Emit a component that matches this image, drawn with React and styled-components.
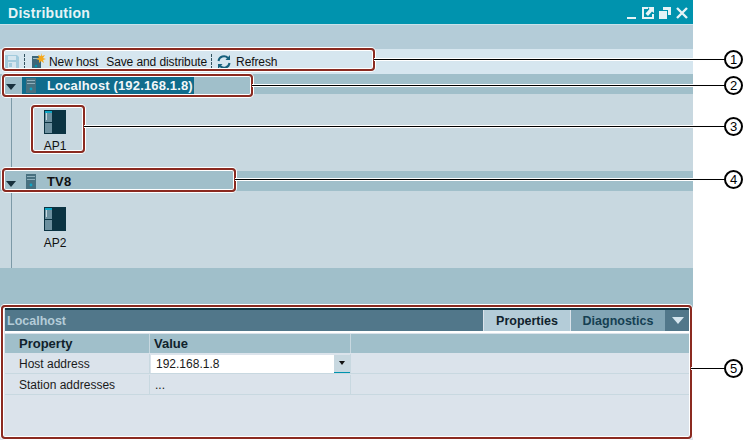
import React from "react"
import styled, { createGlobalStyle } from "styled-components"

const GlobalStyle = createGlobalStyle`
  html, body { margin: 0; padding: 0; background: #fff; }
  body { font-family: "Liberation Sans", sans-serif; font-size: 12px; color: #111; }
`

const Page = styled.div`
  position: relative;
  width: 743px;
  height: 440px;
  overflow: hidden;
`
const Win = styled.div`
  width: 693px;
  height: 440px;
  display: flex;
  flex-direction: column;
  background: #dbe3eb;
`
const TitleBar = styled.div`
  height: 22px;
  flex: none;
  display: flex;
  align-items: center;
  justify-content: space-between;
  padding: 2px 5px 0 8px;
  background: #0093ae;
  border-bottom: 1px solid #c9e2ea;
`
const Title = styled.span`
  font-size: 14px;
  font-weight: 700;
  letter-spacing: 0.3px;
  color: #e6f3f6;
`
const WinButtons = styled.div`
  display: flex;
  gap: 5px;
  align-items: center;
`
const Band = styled.div`
  height: 24px;
  flex: none;
  background: #b4ccd8;
`
const Toolbar = styled.div`
  height: 25px;
  flex: none;
  display: flex;
  align-items: center;
  padding: 0 0 0 5px;
  background: #d6e6ef;
`
const ToolText = styled.span`
  margin-left: ${p => p.$gap || 3}px;
  letter-spacing: -0.1px;
  white-space: nowrap;
`
const ToolSep = styled.span`
  width: 0;
  height: 15px;
  margin: 0 ${p => p.$right}px 0 ${p => p.$left}px;
  border-left: 1px dashed #33525f;
`
const Tree = styled.div`
  flex: none;
  height: 194px;
  background: #c8d8e0;
`
const HostRow = styled.div`
  height: 20px;
  display: flex;
  align-items: flex-end;
  background: #a0bfca;
`
const Arrow = styled.span`
  width: 0;
  height: 0;
  margin: 0 6px 4px 6px;
  border-style: solid;
  border-width: 6px 5.5px 0 5.5px;
  border-color: #17303c transparent transparent transparent;
`
const HostLabel = styled.div`
  height: ${p => (p.$selected ? 17 : 20)}px;
  display: flex;
  align-items: center;
  padding: 0 1px 0 4px;
  background: ${p => (p.$selected ? "#0f6c8c" : "transparent")};
`
const HostName = styled.span`
  margin-left: 11px;
  font-size: 13px;
  font-weight: 700;
  letter-spacing: 0.15px;
  color: ${p => (p.$selected ? "#f2f7f9" : "#111")};
`
const HostBody = styled.div`
  height: 77px;
  margin-left: 11px;
  padding: 16px 0 0 32px;
  border-left: 1px solid #7c99a7;
  box-sizing: border-box;
`
const Station = styled.div`
  width: 22px;
  display: flex;
  flex-direction: column;
  align-items: center;
`
const StationLabel = styled.span`
  margin-top: 5px;
  white-space: nowrap;
`
const Gap = styled.div`
  height: 40px;
  flex: none;
  background: #a0bfca;
`
const Panel = styled.div`
  flex: 1;
  display: flex;
  flex-direction: column;
  padding: 0 3px 0 5px;
  background: #dbe3eb;
`
const PanelHead = styled.div`
  height: 21px;
  flex: none;
  display: flex;
  align-items: flex-end;
  justify-content: space-between;
  background: #51778a;
  border-top: 2px solid #0e3440;
  border-bottom: 2px solid #fff;
`
const PanelTitle = styled.span`
  align-self: center;
  margin-left: 2px;
  font-size: 12.5px;
  font-weight: 700;
  color: #b4ccd8;
`
const Tabs = styled.div`
  display: flex;
  height: 100%;
`
const Tab = styled.div`
  width: ${p => p.$width}px;
  display: flex;
  align-items: center;
  justify-content: center;
  font-size: 12.5px;
  font-weight: 700;
  color: ${p => (p.$active ? "#10222c" : "#153f52")};
  background: ${p => (p.$active ? "#b4ccd8" : "#82a5b5")};
  border-left: 1px solid #dbe3eb;
  box-sizing: border-box;
`
const TabMenu = styled.div`
  width: 25px;
  display: flex;
  align-items: center;
  justify-content: center;
`
const TabArrow = styled.span`
  width: 0;
  height: 0;
  border-style: solid;
  border-width: 7px 6px 0 6px;
  border-color: #d6e6ef transparent transparent transparent;
`
const Row = styled.div`
  display: grid;
  grid-template-columns: 145px 201px 1fr;
  height: ${p => (p.$head ? 19 : 21)}px;
  flex: none;
  padding-top: ${p => (p.$head ? 0 : 1)}px;
  font-size: ${p => (p.$head ? 13 : 12)}px;
  font-weight: ${p => (p.$head ? 700 : 400)};
  background: ${p => (p.$head ? "#a0bfca" : "transparent")};
  border-bottom: ${p => (p.$head ? "0" : "1px solid #c8d8e0")};
  margin-top: ${p => (p.$head ? 1 : 0)}px;
  box-sizing: border-box;
`
const Cell = styled.div`
  display: flex;
  align-items: center;
  padding-left: ${p => p.$pad}px;
  border-right: 1px solid #c8d8e0;
  color: ${p => (p.$head ? "#10222c" : "#1a1a1a")};
`
const Combo = styled.div`
  flex: 1;
  height: 18px;
  margin-left: 1px;
  display: flex;
  align-items: center;
  justify-content: space-between;
  padding-left: 5px;
  background: #fff;
`
const ComboButton = styled.div`
  width: 16px;
  height: 18px;
  display: flex;
  align-items: center;
  justify-content: center;
  background: #c8d8e0;
  border-bottom: 1px solid #0093ae;
  box-sizing: border-box;
`
const ComboArrow = styled.span`
  width: 0;
  height: 0;
  border-style: solid;
  border-width: 4px 3.5px 0 3.5px;
  border-color: #111 transparent transparent transparent;
`
const Marker = styled.div`
  position: absolute;
  left: ${p => p.$x}px;
  top: ${p => p.$y}px;
  width: ${p => p.$w}px;
  height: ${p => p.$h}px;
  box-sizing: border-box;
  border: 2px solid #8b2a20;
  border-radius: 4px;
  box-shadow: 0 0 0 1px #fff, inset 0 0 0 1px #fff;
`
const Leader = styled.div`
  position: absolute;
  left: ${p => p.$x}px;
  top: ${p => p.$y}px;
  width: ${p => 725 - p.$x}px;
  height: 1px;
  background: #000;
  box-shadow: 0 1px 0 #fff, 0 -1px 0 #fff;
`
const Bubble = styled.div`
  position: absolute;
  left: 724px;
  top: ${p => p.$y - 9}px;
  width: 19px;
  height: 19px;
  box-sizing: border-box;
  display: flex;
  align-items: center;
  justify-content: center;
  border: 2px solid #000;
  border-radius: 50%;
  background: #fff;
  font-size: 13px;
  color: #000;
`

const Minimize = () => (
  <svg width="10" height="12" viewBox="0 0 10 12"><rect x="0" y="10" width="9" height="2" fill="#e6f3f6" /></svg>
)
const Detach = () => (
  <svg width="12" height="12" viewBox="0 0 12 12">
    <path d="M6 1H1v10h10V7" fill="none" stroke="#e6f3f6" strokeWidth="2" />
    <path d="M6 0h6v6L10 4.500 6 9 3.500 6.500 7.500 2z" fill="#e6f3f6" />
  </svg>
)
const Restore = () => (
  <svg width="12" height="12" viewBox="0 0 12 12" fill="#e6f3f6">
    <path d="M4 0h8v8H9V3H4z" />
    <rect x="0" y="4" width="8" height="8" />
  </svg>
)
const CloseX = () => (
  <svg width="12" height="12" viewBox="0 0 12 12" stroke="#e6f3f6" strokeWidth="2.400">
    <path d="M1 1l10 10M11 1L1 11" />
  </svg>
)
const SaveIcon = () => (
  <svg width="14" height="13" viewBox="0 0 14 13">
    <path d="M0 0h12l2 2v11H0z" fill="#a3cbdd" />
    <rect x="3" y="1" width="8" height="4" fill="#d6e6ef" />
    <rect x="3" y="7" width="8" height="6" fill="#d6e6ef" />
    <rect x="4" y="8" width="3" height="4" fill="#a3cbdd" />
  </svg>
)
const NewHostIcon = () => (
  <svg width="14" height="17" viewBox="0 0 14 17">
    <rect x="0" y="3" width="9" height="14" fill="#3d6678" />
    <rect x="1" y="5" width="7" height="1" fill="#a0bfca" />
    <circle cx="4" cy="13" r="1.300" fill="#0093ae" />
    <path d="M9 0l1 3 3-1-2 3 3 1-3 1 1 3-3-2-2 2 0-3-3-1 3-1-1-3 3 1z" fill="#f5a81c" />
  </svg>
)
const RefreshIcon = () => (
  <svg width="14" height="14" viewBox="0 0 14 14" fill="none" stroke="#17607c" strokeWidth="2">
    <path d="M1.500 6a5.500 5.500 0 0 1 9.500-3" />
    <path d="M12.500 8a5.500 5.500 0 0 1-9.500 3" />
    <path d="M13 0v5H8.500z" fill="#17607c" stroke="none" />
    <path d="M1 14V9h4.500z" fill="#17607c" stroke="none" />
  </svg>
)
const ServerIcon = () => (
  <svg width="10" height="15" viewBox="0 0 10 15">
    <rect width="10" height="15" fill="#47707f" />
    <rect x="1" y="2" width="8" height="1" fill="#8fb0bd" />
    <rect x="1" y="5" width="8" height="1" fill="#8fb0bd" />
    <circle cx="5" cy="11" r="1.400" fill="#0ea5c4" />
  </svg>
)
const StationIcon = () => (
  <svg width="22" height="24" viewBox="0 0 22 24">
    <rect width="22" height="24" fill="#0b3342" />
    <rect x="1" y="1" width="7" height="11" fill="#6d909f" />
    <rect x="1" y="1" width="7" height="2" fill="#0ea5c4" />
    <rect x="2" y="3" width="1" height="7" fill="#c8d8e0" />
    <rect x="1" y="13" width="7" height="10" fill="#6d909f" />
  </svg>
)

const Host = ({ name, selected, station }) => (
  <>
    <HostRow>
      <Arrow />
      <HostLabel $selected={selected}>
        <ServerIcon />
        <HostName $selected={selected}>{name}</HostName>
      </HostLabel>
    </HostRow>
    <HostBody>
      <Station>
        <StationIcon />
        <StationLabel>{station}</StationLabel>
      </Station>
    </HostBody>
  </>
)

const callouts = [
  { n: 1, x: 374, y: 59 },
  { n: 2, x: 252, y: 85 },
  { n: 3, x: 84, y: 126 },
  { n: 4, x: 235, y: 179 },
  { n: 5, x: 691, y: 368 },
]

const markers = [
  { x: 2, y: 48, w: 373, h: 23 },
  { x: 2, y: 74, w: 251, h: 23 },
  { x: 31, y: 105, w: 54, h: 48 },
  { x: 2, y: 168, w: 234, h: 24 },
  { x: 1, y: 305, w: 691, h: 134 },
]

const App = () => (
  <Page>
    <GlobalStyle />
    <Win>
      <TitleBar>
        <Title>Distribution</Title>
        <WinButtons>
          <Minimize />
          <Detach />
          <Restore />
          <CloseX />
        </WinButtons>
      </TitleBar>
      <Band />
      <Toolbar>
        <SaveIcon />
        <ToolSep $left={5} $right={7} />
        <NewHostIcon />
        <ToolText>New host</ToolText>
        <ToolText $gap={8}>Save and distribute</ToolText>
        <ToolSep $left={4} $right={5} />
        <RefreshIcon />
        <ToolText $gap={5}>Refresh</ToolText>
      </Toolbar>
      <Tree>
        <Host name="Localhost (192.168.1.8)" selected station="AP1" />
        <Host name="TV8" station="AP2" />
      </Tree>
      <Gap />
      <Panel>
        <PanelHead>
          <PanelTitle>Localhost</PanelTitle>
          <Tabs>
            <Tab $active $width={87}>Properties</Tab>
            <Tab $width={95}>Diagnostics</Tab>
            <TabMenu><TabArrow /></TabMenu>
          </Tabs>
        </PanelHead>
        <Row $head>
          <Cell $head $pad={14}>Property</Cell>
          <Cell $head $pad={4}>Value</Cell>
          <Cell $head />
        </Row>
        <Row>
          <Cell $pad={14}>Host address</Cell>
          <Cell>
            <Combo>
              192.168.1.8
              <ComboButton><ComboArrow /></ComboButton>
            </Combo>
          </Cell>
          <Cell />
        </Row>
        <Row>
          <Cell $pad={14}>Station addresses</Cell>
          <Cell $pad={5}>...</Cell>
          <Cell />
        </Row>
      </Panel>
    </Win>
    {markers.map(m => (
      <Marker key={m.y} $x={m.x} $y={m.y} $w={m.w} $h={m.h} />
    ))}
    {callouts.map(c => (
      <React.Fragment key={c.n}>
        <Leader $x={c.x} $y={c.y} />
        <Bubble $y={c.y}>{c.n}</Bubble>
      </React.Fragment>
    ))}
  </Page>
)

export default App
